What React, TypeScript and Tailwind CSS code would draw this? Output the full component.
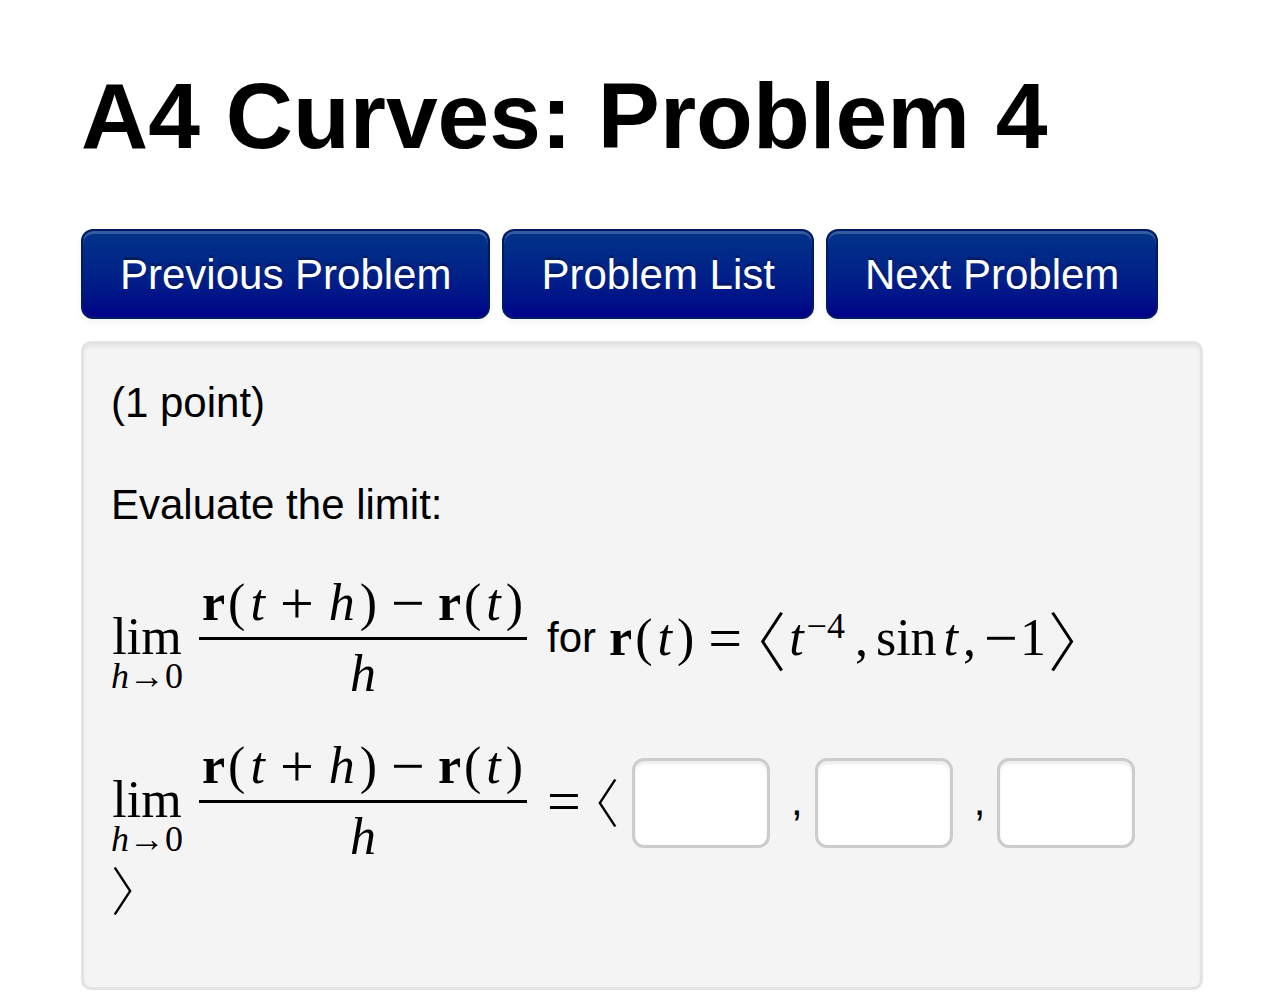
import type { ReactNode } from 'react';

const navItems = ['Previous Problem', 'Problem List', 'Next Problem'];

const Roman = ({ children }: { children: ReactNode }) => <span className="px-0.5">{children}</span>;

const Vector = ({ children }: { children: ReactNode }) => <b className="px-px font-bold">{children}</b>;

const Variable = ({ children }: { children: ReactNode }) => <i className="px-[3px] italic">{children}</i>;

const Operator = ({ children }: { children: ReactNode }) => <span className="px-3 text-[60px]">{children}</span>;

const Comma = () => <span className="pr-2 pl-0.5">,</span>;

const Angle = ({ children }: { children: ReactNode }) => (
    <span className="font-['Noto_Sans_CJK_JP',sans-serif] leading-[44px] font-light [font-feature-settings:'halt']">
        {children}
    </span>
);

const TallAngle = ({ children }: { children: ReactNode }) => (
    <span className="font-['Noto_Sans_CJK_JP',sans-serif] text-[64px] leading-[56px] font-light [font-feature-settings:'halt']">
        {children}
    </span>
);

const RofT = () => (
    <>
        <Vector>r</Vector>
        <Roman>(</Roman>
        <Variable>t</Variable>
        <Roman>)</Roman>
    </>
);

const math = "flex items-center whitespace-nowrap font-['Liberation_Serif',serif] text-[52px] leading-[60px]";

const DifferenceQuotient = () => (
    <div className={`${math} gap-4`}>
        <div className="flex flex-col items-center pt-8">
            <span className="leading-[44px]">lim</span>
            <span className="flex text-[36px] leading-[34px]">
                <i>h</i>
                <span>→</span>
                <span>0</span>
            </span>
        </div>
        <div className="flex flex-col items-center pt-0.5">
            <div className="flex px-0.5 pb-1">
                <Vector>r</Vector>
                <Roman>(</Roman>
                <Variable>t</Variable>
                <Operator>+</Operator>
                <Variable>h</Variable>
                <Roman>)</Roman>
                <Operator>−</Operator>
                <RofT />
            </div>
            <div className="w-full border-t-3 border-black pt-1 text-center">
                <i>h</i>
            </div>
        </div>
    </div>
);

const AnswerBlank = ({ index }: { index: number }) => (
    <input
        type="text"
        aria-label={`answer ${index}`}
        className="mt-1 mr-[21px] h-[90px] w-[138px] rounded-xl border-3 border-[#ccc] bg-white px-3 shadow-[inset_0_3px_3px_rgba(0,0,0,0.075)]"
    />
);

const App = () => {
    return (
        <main className="min-h-screen bg-white px-[81px] pt-[60px] pb-4 font-['Liberation_Sans',sans-serif] text-[42px] leading-[60px] text-black">
            <h1 className="text-[93px] leading-[112px] font-bold">A4 Curves: Problem 4</h1>

            <nav className="mt-[57px] flex flex-wrap gap-3">
                {navItems.map((item) => (
                    <button
                        key={item}
                        type="button"
                        className="rounded-xl border-2 border-[#001a66] bg-linear-to-b from-[#003388] to-[#000088] px-[37px] pt-[14px] pb-3 text-white shadow-[inset_0_3px_0_rgba(255,255,255,0.2),0_3px_6px_rgba(0,0,0,0.05)] [text-shadow:0_-3px_0_rgba(0,0,0,0.25)]"
                    >
                        {item}
                    </button>
                ))}
            </nav>

            <section className="mt-[22px] rounded-[10px] border-3 border-[#e3e3e3] bg-[#f4f4f4] px-[27px] pt-[29px] pb-7 shadow-[inset_0_3px_3px_rgba(0,0,0,0.05)]">
                <p>(1 point)</p>
                <p className="mt-[42px]">Evaluate the limit:</p>

                <div className="mt-9 flex flex-wrap items-center">
                    <DifferenceQuotient />
                    <span className="mr-3 ml-5">for</span>
                    <div className={math}>
                        <RofT />
                        <Operator>=</Operator>
                        <TallAngle>〈</TallAngle>
                        <Variable>t</Variable>
                        <sup className="top-0 mr-2 self-start text-[36px] leading-[36px]">−4</sup>
                        <Comma />
                        <span className="pr-1">sin</span>
                        <Variable>t</Variable>
                        <Comma />
                        <span className="text-[60px]">−</span>
                        <Roman>1</Roman>
                        <TallAngle>〉</TallAngle>
                    </div>
                </div>

                <div className="mt-[30px] mb-12 flex flex-wrap items-center">
                    <DifferenceQuotient />
                    <div className={`${math} mr-[13px] ml-2`}>
                        <Operator>=</Operator>
                        <Angle>〈</Angle>
                    </div>
                    <AnswerBlank index={1} />
                    <span className="mr-3">,</span>
                    <AnswerBlank index={2} />
                    <span className="mr-3">,</span>
                    <AnswerBlank index={3} />
                    <div className={math}>
                        <Angle>〉</Angle>
                    </div>
                </div>
            </section>
        </main>
    );
};

export default App;
